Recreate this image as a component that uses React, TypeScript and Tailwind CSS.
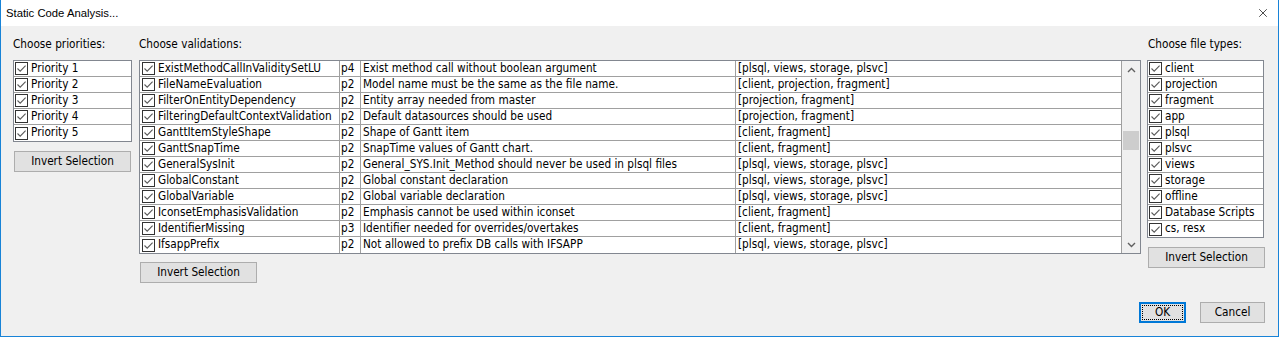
import { X } from "lucide-react";

type Validation = {
  name: string;
  priority: string;
  description: string;
  fileTypes: string;
};

const PRIORITIES = ["Priority 1", "Priority 2", "Priority 3", "Priority 4", "Priority 5"];

const VALIDATIONS: Validation[] = [
  { name: "ExistMethodCallInValiditySetLU", priority: "p4", description: "Exist method call without boolean argument", fileTypes: "[plsql, views, storage, plsvc]" },
  { name: "FileNameEvaluation", priority: "p2", description: "Model name must be the same as the file name.", fileTypes: "[client, projection, fragment]" },
  { name: "FilterOnEntityDependency", priority: "p2", description: "Entity array needed from master", fileTypes: "[projection, fragment]" },
  { name: "FilteringDefaultContextValidation", priority: "p2", description: "Default datasources should be used", fileTypes: "[projection, fragment]" },
  { name: "GanttItemStyleShape", priority: "p2", description: "Shape of Gantt item", fileTypes: "[client, fragment]" },
  { name: "GanttSnapTime", priority: "p2", description: "SnapTime values of Gantt chart.", fileTypes: "[client, fragment]" },
  { name: "GeneralSysInit", priority: "p2", description: "General_SYS.Init_Method should never be used in plsql files", fileTypes: "[plsql, views, storage, plsvc]" },
  { name: "GlobalConstant", priority: "p2", description: "Global constant declaration", fileTypes: "[plsql, views, storage, plsvc]" },
  { name: "GlobalVariable", priority: "p2", description: "Global variable declaration", fileTypes: "[plsql, views, storage, plsvc]" },
  { name: "IconsetEmphasisValidation", priority: "p2", description: "Emphasis cannot be used within iconset", fileTypes: "[client, fragment]" },
  { name: "IdentifierMissing", priority: "p3", description: "Identifier needed for overrides/overtakes", fileTypes: "[client, fragment]" },
  { name: "IfsappPrefix", priority: "p2", description: "Not allowed to prefix DB calls with IFSAPP", fileTypes: "[plsql, views, storage, plsvc]" },
];

const FILE_TYPES = ["client", "projection", "fragment", "app", "plsql", "plsvc", "views", "storage", "offline", "Database Scripts", "cs, resx"];

function CheckBox() {
  return (
    <span className="flex h-[13px] w-[13px] shrink-0 items-center justify-center border border-[#333333] bg-white">
      <svg width="11" height="11" viewBox="0 0 11 11">
        <path d="M1.5 5.5 L4.2 8.2 L9.6 2.6" fill="none" stroke="#5a5a5a" strokeWidth="1.1" />
      </svg>
    </span>
  );
}

function CheckList({ items }: { items: string[] }) {
  return (
    <div className="flex flex-col border border-[#828790] bg-white">
      {items.map((item, i) => (
        <div
          key={item}
          className={`flex h-[16px] items-center gap-[3px] pl-[1px] ${i < items.length - 1 ? "border-b border-[#a0a0a0]" : ""}`}
        >
          <CheckBox />
          <span className="leading-none">{item}</span>
        </div>
      ))}
    </div>
  );
}

function InvertButton() {
  return (
    <button
      type="button"
      className="ml-[1px] flex h-[21px] w-[117px] items-center justify-center border border-[#adadad] bg-[#e1e1e1]"
    >
      Invert Selection
    </button>
  );
}

export default function App() {
  return (
    <div className="flex h-[337px] w-[1279px] flex-col border border-t-0 border-[#1883d7] bg-[#f0f0f0] font-['DejaVu_Sans_Condensed','Liberation_Sans',sans-serif] text-[11.7px] text-black">
      <div className="flex h-[26px] shrink-0 items-center justify-between bg-white pl-[5px] pr-[8px]">
        <span className="font-['Liberation_Sans',sans-serif] text-[11.3px]">Static Code Analysis...</span>
        <X className="h-[14px] w-[14px]" strokeWidth={1.2} />
      </div>

      <div className="flex flex-1 flex-col px-[12px] pt-[12px]">
        <div className="flex flex-1">
          <div className="flex w-[119px] flex-col">
            <div className="h-[13px] leading-[13px]">Choose priorities:</div>
            <div className="mt-[9px]">
              <CheckList items={PRIORITIES} />
            </div>
            <div className="mt-[9px]">
              <InvertButton />
            </div>
          </div>

          <div className="ml-[7px] flex w-[1002px] flex-col">
            <div className="h-[13px] leading-[13px]">Choose validations:</div>
            <div className="mt-[9px] flex border border-[#828790] bg-white">
              <div className="flex flex-1 flex-col">
                {VALIDATIONS.map((v, i) => (
                  <div
                    key={v.name}
                    className={`flex h-[16px] items-stretch ${i < VALIDATIONS.length - 1 ? "border-b border-[#a0a0a0]" : ""}`}
                  >
                    <div className="flex w-[200px] items-center gap-[3px] border-r border-[#a0a0a0] pl-[2px]">
                      <CheckBox />
                      <span className="leading-none">{v.name}</span>
                    </div>
                    <div className="flex w-[21px] items-center border-r border-[#a0a0a0] pl-[1px]">{v.priority}</div>
                    <div className="flex w-[375px] items-center border-r border-[#a0a0a0] pl-[2px]">{v.description}</div>
                    <div className="flex flex-1 items-center border-r border-[#a0a0a0] pl-[2px]">{v.fileTypes}</div>
                  </div>
                ))}
              </div>
              <div className="flex w-[18px] flex-col bg-[#f0f0f0]">
                <div className="flex h-[17px] items-center justify-center">
                  <svg width="9" height="6" viewBox="0 0 9 6">
                    <path d="M1 5 L4.5 1.5 L8 5" fill="none" stroke="#606060" strokeWidth="1.4" />
                  </svg>
                </div>
                <div className="flex flex-1 flex-col pt-[53px]">
                  <div className="mx-[1px] h-[19px] bg-[#cdcdcd]" />
                </div>
                <div className="flex h-[17px] items-center justify-center">
                  <svg width="9" height="6" viewBox="0 0 9 6">
                    <path d="M1 1 L4.5 4.5 L8 1" fill="none" stroke="#606060" strokeWidth="1.4" />
                  </svg>
                </div>
              </div>
            </div>
            <div className="mt-[8px]">
              <InvertButton />
            </div>
          </div>

          <div className="ml-[6px] flex w-[118px] flex-col">
            <div className="h-[13px] pl-[1px] leading-[13px]">Choose file types:</div>
            <div className="mt-[9px] w-[117px]">
              <CheckList items={FILE_TYPES} />
            </div>
            <div className="mt-[9px]">
              <InvertButton />
            </div>
          </div>
        </div>

        <div className="flex justify-end gap-[14px] pb-[13px] pr-[1px]">
          <button
            type="button"
            className="flex h-[21px] w-[47px] items-center justify-center border-2 border-[#0078d7] bg-[#e1e1e1] p-[1px]"
          >
            <span className="flex h-full w-full items-center justify-center border border-dotted border-black">OK</span>
          </button>
          <button
            type="button"
            className="flex h-[21px] w-[65px] items-center justify-center border border-[#adadad] bg-[#e1e1e1]"
          >
            Cancel
          </button>
        </div>
      </div>
    </div>
  );
}
